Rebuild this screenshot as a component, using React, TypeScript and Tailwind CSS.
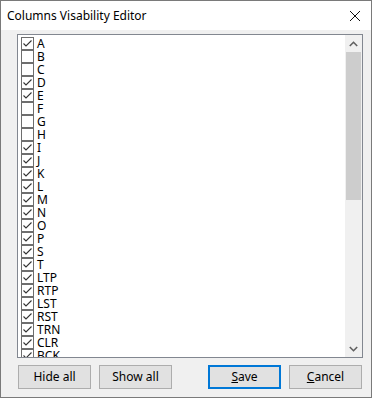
import React from "react";

const items: [string, boolean][] = [
  ["A", true], ["B", false], ["C", false], ["D", true], ["E", true], ["F", false],
  ["G", false], ["H", false], ["I", true], ["J", true], ["K", true], ["L", true],
  ["M", true], ["N", true], ["O", true], ["P", true], ["S", true], ["T", true],
  ["LTP", true], ["RTP", true], ["LST", true], ["RST", true], ["TRN", true],
  ["CLR", true], ["BCK", true],
];

function Box({ checked }: { checked: boolean }) {
  return (
    <svg width="13" height="13" viewBox="0 0 13 13" className="shrink-0">
      <rect x="0.5" y="0.5" width="12" height="12" fill="#fff" stroke="#6e6e6e" />
      {checked && (
        <polyline points="2.5,6.5 5,9 10.5,3.5" fill="none" stroke="#333" strokeWidth="1.1" />
      )}
    </svg>
  );
}

function Btn({ children, primary }: { children: React.ReactNode; primary?: boolean }) {
  return (
    <div
      className={
        "w-[73px] h-[24px] flex items-center justify-center bg-[#e1e1e1] text-[12px] text-black " +
        (primary ? "border-2 border-[#0078d7]" : "border border-[#adadad]")
      }
    >
      {children}
    </div>
  );
}

export default function App() {
  return (
    <div
      className="w-[372px] h-[398px] border border-[#7a7a7a] bg-[#f0f0f0] flex flex-col overflow-hidden"
      style={{ fontFamily: '"Segoe UI", "Noto Sans", "Open Sans", sans-serif' }}
    >
      <div className="h-[29px] bg-white flex items-center justify-between pl-[6px] pr-[10px] shrink-0">
        <span className="text-[12px] text-black">Columns Visability Editor</span>
        <svg width="12" height="12" viewBox="0 0 12 12">
          <path d="M1 1 L11 11 M11 1 L1 11" stroke="#111" strokeWidth="1" />
        </svg>
      </div>
      <div className="pl-[16px] pt-[4px]">
        <div className="w-[346px] h-[324px] border border-[#828790] bg-white flex overflow-hidden">
          <div className="flex-1 pt-[2px] pl-[3px] overflow-hidden">
            {items.map(([n, c]) => (
              <div key={n} className="h-[13px] flex items-center gap-[2px] text-[12px] leading-[13px] text-black">
                <Box checked={c} />
                <span className="pl-[1px]">{n}</span>
              </div>
            ))}
          </div>
          <div className="w-[17px] h-full bg-[#f0f0f0] flex flex-col">
            <div className="h-[17px] flex items-center justify-center">
              <svg width="9" height="6" viewBox="0 0 9 6">
                <path d="M0.8 5 L4.5 1.3 L8.2 5" fill="none" stroke="#606060" strokeWidth="1.6" />
              </svg>
            </div>
            <div className="mx-[1px] h-[148px] bg-[#cdcdcd]" />
            <div className="flex-1" />
            <div className="h-[17px] flex items-center justify-center">
              <svg width="9" height="6" viewBox="0 0 9 6">
                <path d="M0.8 1 L4.5 4.7 L8.2 1" fill="none" stroke="#606060" strokeWidth="1.6" />
              </svg>
            </div>
          </div>
        </div>
      </div>
      <div className="flex pl-[17px] pt-[7px]">
        <Btn>Hide all</Btn>
        <div className="w-[8px]" />
        <Btn>Show all</Btn>
        <div className="w-[36px]" />
        <Btn primary>
          <span><span className="underline">S</span>ave</span>
        </Btn>
        <div className="w-[8px]" />
        <Btn>
          <span><span className="underline">C</span>ancel</span>
        </Btn>
      </div>
    </div>
  );
}
